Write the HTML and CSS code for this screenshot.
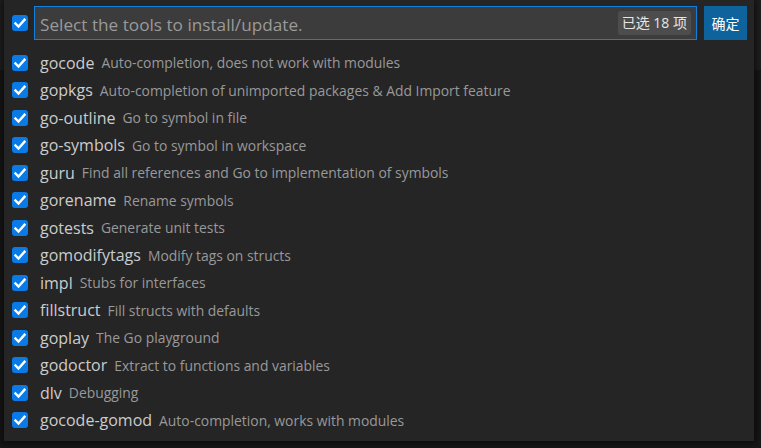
FILE: index.html
```html
<!DOCTYPE html>
<html>
<head>
<meta charset="utf-8">
<link rel="stylesheet" href="styles.css">
</head>
<body>
<div class="backdrop">
  <div class="panel">
    <div class="header">
      <span class="cb"><svg viewBox="0 0 16 16"><polyline points="3.5,8.5 6.5,11.5 12.5,4.8"/></svg></span>
      <div class="input">
        <span class="placeholder">Select the tools to install/update.</span>
        <span class="badge">已选 18 项</span>
      </div>
      <button class="ok">确定</button>
    </div>
    <ul class="list">
      <li><span class="cb"><svg viewBox="0 0 16 16"><polyline points="3.5,8.5 6.5,11.5 12.5,4.8"/></svg></span><span class="label">gocode</span><span class="desc">Auto-completion, does not work with modules</span></li>
      <li><span class="cb"><svg viewBox="0 0 16 16"><polyline points="3.5,8.5 6.5,11.5 12.5,4.8"/></svg></span><span class="label">gopkgs</span><span class="desc">Auto-completion of unimported packages &amp; Add Import feature</span></li>
      <li><span class="cb"><svg viewBox="0 0 16 16"><polyline points="3.5,8.5 6.5,11.5 12.5,4.8"/></svg></span><span class="label">go-outline</span><span class="desc">Go to symbol in file</span></li>
      <li><span class="cb"><svg viewBox="0 0 16 16"><polyline points="3.5,8.5 6.5,11.5 12.5,4.8"/></svg></span><span class="label">go-symbols</span><span class="desc">Go to symbol in workspace</span></li>
      <li><span class="cb"><svg viewBox="0 0 16 16"><polyline points="3.5,8.5 6.5,11.5 12.5,4.8"/></svg></span><span class="label">guru</span><span class="desc">Find all references and Go to implementation of symbols</span></li>
      <li><span class="cb"><svg viewBox="0 0 16 16"><polyline points="3.5,8.5 6.5,11.5 12.5,4.8"/></svg></span><span class="label">gorename</span><span class="desc">Rename symbols</span></li>
      <li><span class="cb"><svg viewBox="0 0 16 16"><polyline points="3.5,8.5 6.5,11.5 12.5,4.8"/></svg></span><span class="label">gotests</span><span class="desc">Generate unit tests</span></li>
      <li><span class="cb"><svg viewBox="0 0 16 16"><polyline points="3.5,8.5 6.5,11.5 12.5,4.8"/></svg></span><span class="label">gomodifytags</span><span class="desc">Modify tags on structs</span></li>
      <li><span class="cb"><svg viewBox="0 0 16 16"><polyline points="3.5,8.5 6.5,11.5 12.5,4.8"/></svg></span><span class="label">impl</span><span class="desc">Stubs for interfaces</span></li>
      <li><span class="cb"><svg viewBox="0 0 16 16"><polyline points="3.5,8.5 6.5,11.5 12.5,4.8"/></svg></span><span class="label">fillstruct</span><span class="desc">Fill structs with defaults</span></li>
      <li><span class="cb"><svg viewBox="0 0 16 16"><polyline points="3.5,8.5 6.5,11.5 12.5,4.8"/></svg></span><span class="label">goplay</span><span class="desc">The Go playground</span></li>
      <li><span class="cb"><svg viewBox="0 0 16 16"><polyline points="3.5,8.5 6.5,11.5 12.5,4.8"/></svg></span><span class="label">godoctor</span><span class="desc">Extract to functions and variables</span></li>
      <li><span class="cb"><svg viewBox="0 0 16 16"><polyline points="3.5,8.5 6.5,11.5 12.5,4.8"/></svg></span><span class="label">dlv</span><span class="desc">Debugging</span></li>
      <li><span class="cb"><svg viewBox="0 0 16 16"><polyline points="3.5,8.5 6.5,11.5 12.5,4.8"/></svg></span><span class="label">gocode-gomod</span><span class="desc">Auto-completion, works with modules</span></li>
    </ul>
  </div>
</div>
</body>
</html>
```

FILE: styles.css
```css
html, body {
  margin: 0;
  padding: 0;
  background: #181818;
  width: 761px;
  height: 448px;
  overflow: hidden;
}
.backdrop {
  padding-left: 4px;
  height: 448px;
  background: linear-gradient(#202020 0, #202020 70px, #171717 70px);
  font-family: "Segoe UI", "Open Sans", "Noto Sans", "Noto Sans CJK SC", sans-serif;
}
.panel {
  width: 750px;
  height: 441px;
  background: #252526;
  box-shadow: 0 0 8px 2px rgba(0,0,0,0.6);
  box-sizing: border-box;
}
.header {
  display: flex;
  align-items: center;
  padding: 6px 7px 0 8px;
  height: 34px;
}
.cb {
  width: 16px;
  height: 16px;
  border-radius: 3px;
  background: #0a7ae6;
  flex: none;
  display: flex;
}
.cb svg {
  width: 16px;
  height: 16px;
  fill: none;
  stroke: #fff;
  stroke-width: 2.4;
  stroke-linecap: square;
}
.input {
  margin-left: 6px;
  width: 663px;
  height: 34px;
  box-sizing: border-box;
  border: 1px solid #0f80dc;
  background: #3c3c3c;
  display: flex;
  align-items: center;
  justify-content: space-between;
  padding: 0 5px 0 5px;
}
.placeholder {
  color: #9a9a9a;
  font-size: 17.2px;
  position: relative;
  top: 1px;
}
.badge {
  background: #4d4d4d;
  color: #e6e6e6;
  font-size: 14px;
  border-radius: 3px;
  height: 24px;
  line-height: 24px;
  padding: 0 4px;
}
.ok {
  margin-left: 7px;
  width: 43px;
  height: 34px;
  border: none;
  background: #0e639c;
  color: #fff;
  font-family: inherit;
  font-size: 14px;
  padding: 0;
}
.list {
  list-style: none;
  margin: 9px 0 0 0;
  padding: 0;
}
.list li {
  display: flex;
  align-items: center;
  height: 27.5px;
  padding-left: 8px;
  white-space: nowrap;
}
.label {
  margin-left: 12px;
  color: #cccccc;
  font-size: 16px;
}
.desc {
  margin-left: 7px;
  color: #999999;
  font-size: 13.9px;
}
```
